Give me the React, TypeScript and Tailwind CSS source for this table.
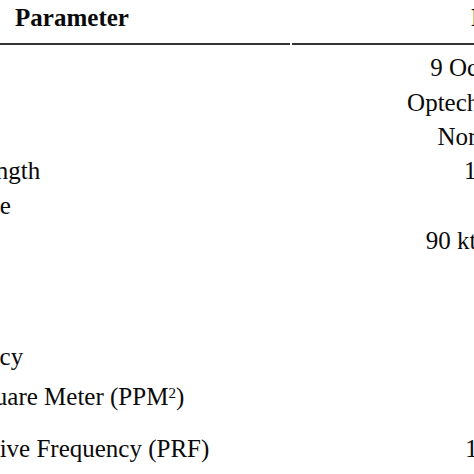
const rows: { label: string; value: string; h: number }[] = [
  { label: 'Survey Date', value: '9 October 2013', h: 34 },
  { label: 'Sensor', value: 'Optech ALTM 3100', h: 35 },
  { label: 'Scan Mode', value: 'Normal Mode', h: 34 },
  { label: 'Scan Wavelength', value: '1064 nm', h: 34 },
  { label: 'Mean Altitude', value: '600 m', h: 35 },
  { label: 'Flight Speed', value: '90 kts (167 kph)', h: 35 },
  { label: 'Scan Angle', value: '±20°', h: 34 },
  { label: 'Swath', value: '400 m', h: 45 },
  { label: 'Laser Accuracy', value: '15 cm', h: 40 },
  { label: 'PPM', value: '4', h: 40 },
  { label: 'Pulse Repetitive Frequency (PRF)', value: '100 kHz', h: 64 },
];

export default function App() {
  return (
    <div className="h-[474px] w-[474px] overflow-hidden bg-white font-['Liberation_Serif',serif] text-[25px] text-[#0a0a0a]">
      <div className="ml-[-146px] w-[870px]">
        {/* Header */}
        <div className="flex">
          <div className="w-[436px] border-b-2 border-[#333] pb-[10px] pt-[2px] text-center font-bold leading-[31px]">
            Parameter
          </div>
          <div className="ml-[2px] w-[432px] border-b-2 border-[#333] pb-[10px] pt-[2px] text-center font-bold leading-[31px]">
            Details
          </div>
        </div>

        {/* Body */}
        <div className="pt-[6px]">
          {rows.map((r) => (
            <div key={r.label} className="flex items-center" style={{ height: r.h }}>
              <div className="w-[436px] pl-[13px] leading-[30px]">
                {r.label === 'PPM' ? (
                  <>
                    Shots Per Square Meter (PPM<sup className="text-[15px]">2</sup>)
                  </>
                ) : (
                  r.label
                )}
              </div>
              <div className="ml-[2px] w-[432px] text-center leading-[30px]">{r.value}</div>
            </div>
          ))}
        </div>
      </div>
    </div>
  );
}
